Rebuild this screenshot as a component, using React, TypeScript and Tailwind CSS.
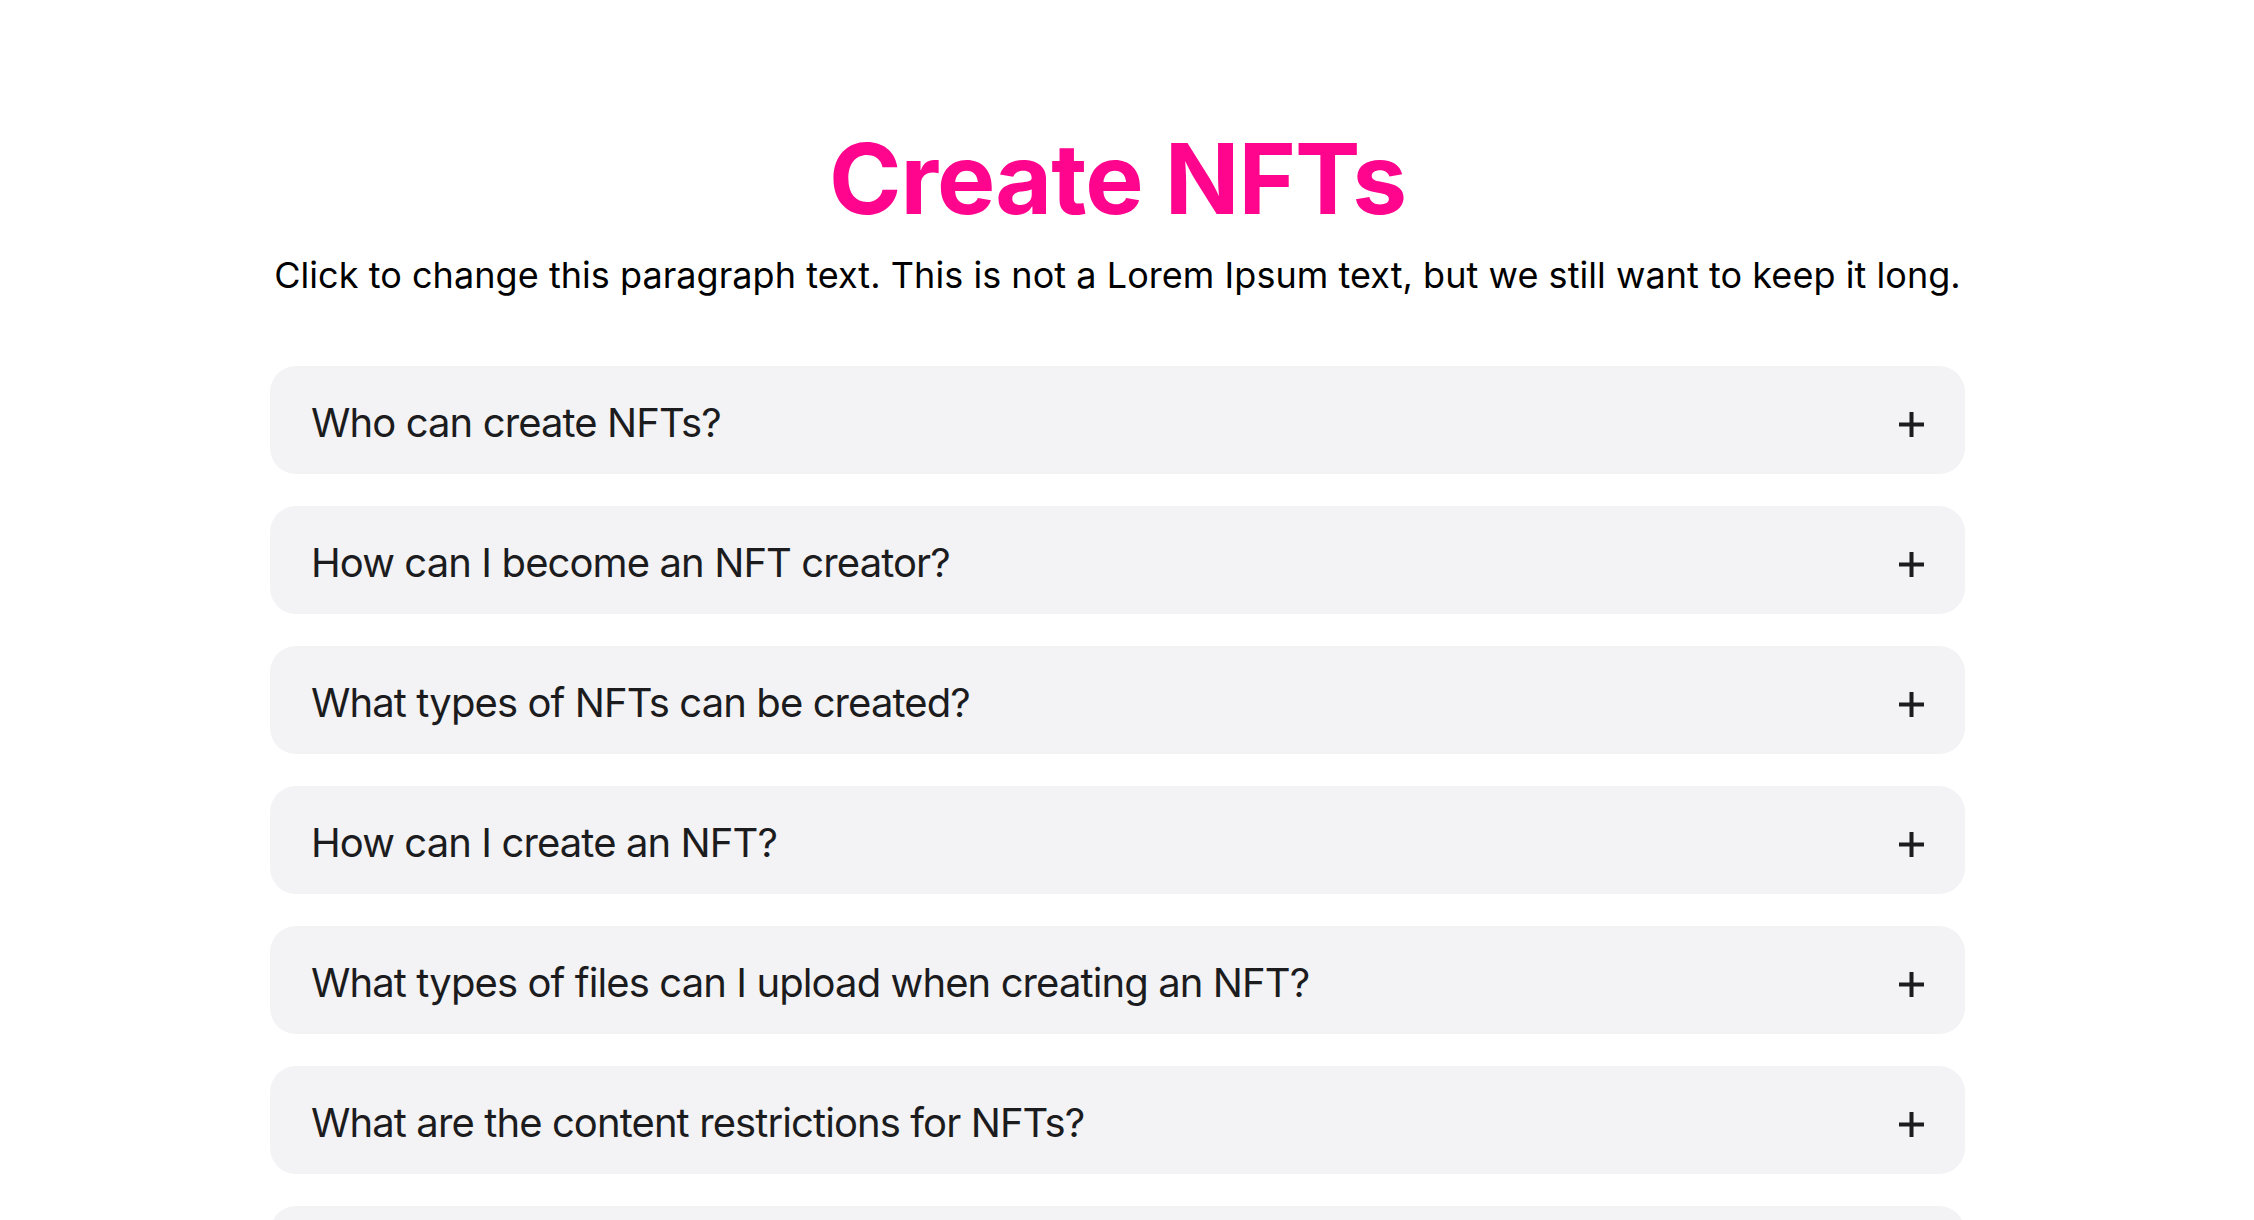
import { useState } from "react";

const questions = [
  "Who can create NFTs?",
  "How can I become an NFT creator?",
  "What types of NFTs can be created?",
  "How can I create an NFT?",
  "What types of files can I upload when creating an NFT?",
  "What are the content restrictions for NFTs?",
  "Can I edit an NFT after it has been created?",
];

const PlusIcon = () => (
  <svg width="25" height="25" viewBox="0 0 25 25" className="shrink-0 mt-2">
    <path d="M12.5 0v25M0 12.5h25" stroke="#1c1c1e" strokeWidth="4" fill="none" />
  </svg>
);

const FaqItem = ({ question }: { question: string }) => {
  const [open, setOpen] = useState(false);
  return (
    <div className="rounded-[26px] bg-[#f3f3f5]">
      <button
        onClick={() => setOpen(!open)}
        className="flex h-[108px] w-full items-center justify-between px-[41px] text-left"
      >
        <span className="mt-[5px] text-[40px] leading-none text-[#1c1c1e] tracking-[-0.9px]">{question}</span>
        <PlusIcon />
      </button>
      {open && (
        <div className="px-[41px] pb-8 text-[28px] text-[#3a3a3c]">
          Click to change this answer text.
        </div>
      )}
    </div>
  );
};

const App = () => {
  return (
    <div
      className="min-h-screen bg-white pt-[130px]"
      style={{ fontFamily: "Inter, 'Noto Sans', sans-serif" }}
    >
      <section className="ml-[270px] w-[1695px]">
        <h1 className="text-center text-[98px] font-bold leading-none tracking-[-1px] text-[#ff048c]">
          Create NFTs
        </h1>
        <p className="mt-[26px] text-center text-[36px] leading-[43px] tracking-[0.05px] text-black">
          Click to change this paragraph text. This is not a Lorem Ipsum text, but we still want to keep it long.
        </p>
        <div className="mt-[69px] flex flex-col gap-[32px] pb-20">
          {questions.map((q) => (
            <FaqItem key={q} question={q} />
          ))}
        </div>
      </section>
    </div>
  );
};

export default App;
